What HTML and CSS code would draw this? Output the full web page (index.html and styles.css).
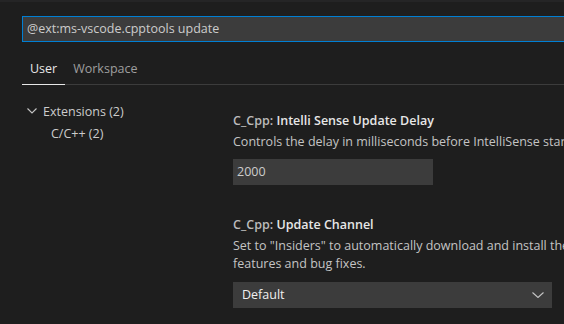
FILE: index.html
```html
<!DOCTYPE html>
<html>
<head>
    <title>Settings</title>
    <meta charset="UTF-8">
    <link rel="stylesheet" href="styles.css">
</head>
<body>
    <div class="topbar"></div>
    <div class="header">
        <div class="search">@ext:ms-vscode.cpptools update</div>
        <div class="tabs">
            <div class="tab active">User</div>
            <div class="tab">Workspace</div>
        </div>
    </div>
    <div class="main">
        <div class="tree">
            <div class="row">
                <svg class="twistie" width="10" height="6" viewBox="0 0 10 6"><path d="M0.5 0.5 L5 5 L9.5 0.5" fill="none" stroke="#c5c5c5" stroke-width="1.1"/></svg>
                Extensions (2)
            </div>
            <div class="row child">C/C++ (2)</div>
        </div>
        <div class="settings">
            <div class="setting">
                <div class="title"><span class="cat">C_Cpp:</span> Intelli Sense Update Delay</div>
                <div class="desc">Controls the delay in milliseconds before IntelliSense starts updating after a modification within the file.</div>
                <div class="value input">2000</div>
            </div>
            <div class="setting">
                <div class="title"><span class="cat">C_Cpp:</span> Update Channel</div>
                <div class="desc">Set to "Insiders" to automatically download and install the latest Insiders builds of the extension, which include upcoming<br>features and bug fixes.</div>
                <div class="value select">
                    Default
                    <svg class="arrow" width="12" height="6" viewBox="0 0 12 6"><path d="M0.5 0.5 L6 5.5 L11.5 0.5" fill="none" stroke="#c5c5c5" stroke-width="1.1"/></svg>
                </div>
            </div>
        </div>
    </div>
</body>
</html>
```

FILE: styles.css
```css
html, body {
    margin: 0;
    height: 100%;
    overflow: hidden;
}
body {
    background-color: #1e1e1e;
    color: #cccccc;
    font-family: "Open Sans", "Noto Sans", sans-serif;
    font-size: 12.5px;
}
.topbar {
    height: 2px;
    background-color: #252526;
}
.header {
    padding: 14px 0 0 22px;
}
.search {
    height: 24px;
    line-height: 24px;
    padding-left: 4px;
    background-color: #3c3c3c;
    border: 1px solid #007fd4;
    border-right: none;
    color: #cccccc;
    white-space: nowrap;
}
.tabs {
    display: flex;
    margin-top: 12px;
    border-bottom: 1px solid #3c3c3c;
}
.tab {
    line-height: 30px;
    padding: 0 8px;
    margin-bottom: -1px;
    border-bottom: 1px solid transparent;
    color: #9e9e9e;
}
.tab.active {
    color: #e7e7e7;
    border-bottom-color: #e7e7e7;
}
.main {
    display: flex;
    padding-top: 15px;
}
.tree {
    width: 233px;
    flex-shrink: 0;
}
.row {
    display: flex;
    align-items: center;
    height: 22px;
    padding-left: 27px;
}
.twistie {
    margin-right: 6px;
}
.row.child {
    padding-left: 51px;
}
.settings {
    flex-shrink: 0;
    width: 800px;
}
.setting {
    padding: 12px 0 19px;
}
.title {
    line-height: 18px;
    margin-bottom: 3px;
    font-weight: 600;
    color: #e7e7e7;
}
.cat {
    color: #bbbbbb;
}
.desc {
    line-height: 18px;
    color: #c4c4c4;
    white-space: nowrap;
}
.value {
    margin-top: 8px;
    height: 26px;
    line-height: 26px;
    background-color: #3c3c3c;
}
.input {
    width: 196px;
    padding-left: 4px;
    color: #cccccc;
}
.select {
    display: flex;
    align-items: center;
    justify-content: space-between;
    width: 302px;
    padding: 0 8px 0 9px;
    margin-top: 9px;
    color: #f0f0f0;
}
```
